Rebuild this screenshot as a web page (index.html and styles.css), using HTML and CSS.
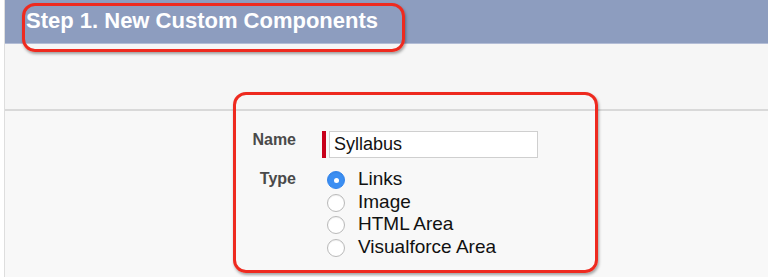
FILE: index.html
```html
<!DOCTYPE html>
<html>
<head>
<meta charset="utf-8">
<link rel="stylesheet" href="styles.css">
</head>
<body>
<div class="panel">
  <div class="header"><h2 class="title">Step 1. New Custom Components</h2></div>
  <div class="spacer"></div>
  <div class="form">
    <div class="row">
      <div class="label label-name">Name</div>
      <div class="field">
        <span class="required"></span>
        <input class="text-input" type="text" value="Syllabus">
      </div>
    </div>
    <div class="row">
      <div class="label label-type">Type</div>
      <div class="field radios">
        <label class="radio-item"><span class="radio checked"></span>Links</label>
        <label class="radio-item"><span class="radio"></span>Image</label>
        <label class="radio-item"><span class="radio"></span>HTML Area</label>
        <label class="radio-item"><span class="radio"></span>Visualforce Area</label>
      </div>
    </div>
  </div>
  <div class="callout callout-title"></div>
  <div class="callout callout-form"></div>
</div>
</body>
</html>
```

FILE: styles.css
```css
html, body {
  margin: 0;
  padding: 0;
  background: #ffffff;
  font-family: "Liberation Sans", Arial, Helvetica, sans-serif;
}
.panel {
  position: relative;
  margin-left: 4px;
  border-left: 1px solid #dedede;
  height: 277px;
  background: #f8f8f8;
  overflow: hidden;
}
.header {
  height: 44px;
  background: #8d9dbf;
  border-bottom: 1px solid #b3bdd6;
  box-sizing: border-box;
  padding: 1px 0 0 21px;
}
.title {
  margin: 0;
  color: #ffffff;
  font-size: 22px;
  font-weight: bold;
  line-height: 39px;
}
.spacer {
  height: 65px;
  background: #f6f6f6;
  border-bottom: 2px solid #d9d9d9;
}
.form {
  padding-top: 20px;
  display: flex;
  flex-direction: column;
  gap: 10px;
}
.row {
  display: grid;
  grid-template-columns: 291px auto;
  column-gap: 26px;
  align-items: start;
}
.label {
  text-align: right;
  font-size: 16px;
  font-weight: bold;
  color: #4a4a4a;
  line-height: 18px;
}
.label-name { padding-top: 0; }
.label-type { padding-top: 2px; }
.field {
  display: flex;
  align-items: stretch;
}
.required {
  width: 4px;
  background: #c8001a;
  margin-right: 3px;
}
.text-input {
  box-sizing: border-box;
  width: 209px;
  height: 27px;
  border: 1px solid #cfcfcf;
  background: #ffffff;
  padding: 0 4px;
  margin: 0;
  font-family: "Liberation Sans", Arial, Helvetica, sans-serif;
  font-size: 18px;
  color: #111111;
  outline: none;
  border-radius: 0;
}
.radios {
  flex-direction: column;
}
.radio-item {
  display: flex;
  align-items: flex-start;
  font-size: 19px;
  line-height: 22.5px;
  color: #111111;
}
.radio {
  box-sizing: border-box;
  width: 18px;
  height: 18px;
  margin: 3px 13px 0 5px;
  border-radius: 50%;
  background: #ffffff;
  border: 1px solid #b9b9b9;
  box-shadow: inset 0 1px 1px rgba(0,0,0,0.06);
  position: relative;
  flex: none;
}
.radio.checked {
  background: #3b8ef2;
  border-color: #3385ec;
}
.radio.checked::after {
  content: "";
  position: absolute;
  left: 5.5px;
  top: 5.5px;
  width: 5px;
  height: 5px;
  border-radius: 50%;
  background: #ffffff;
}
.callout {
  position: absolute;
  border: 3px solid #ee2a1f;
  border-radius: 13px;
  box-shadow: 1px 2px 3px rgba(0,0,0,0.35);
  box-sizing: border-box;
}
.callout-title {
  left: 17px;
  top: 3px;
  width: 383px;
  height: 49px;
}
.callout-form {
  left: 228px;
  top: 92px;
  width: 365px;
  height: 181px;
}
```
